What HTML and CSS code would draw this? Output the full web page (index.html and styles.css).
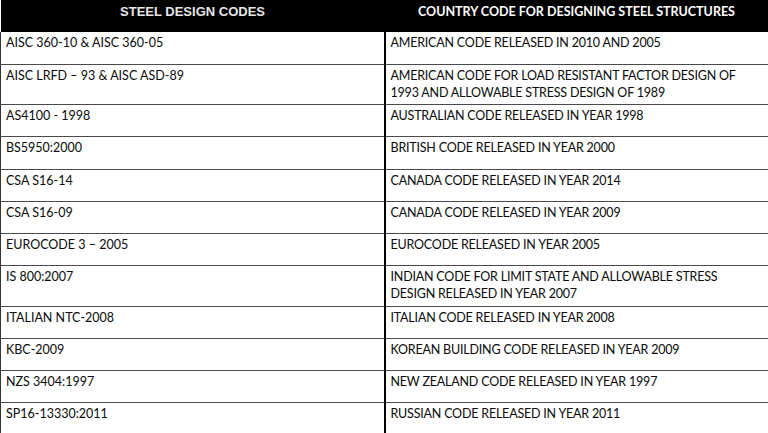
FILE: index.html
```html
<!DOCTYPE html>
<html lang="en">
<head>
<meta charset="utf-8">
<title>Steel Design Codes</title>
<link rel="stylesheet" href="styles.css">
</head>
<body>
<table class="codes">
  <colgroup>
    <col class="col-code">
    <col class="col-desc">
  </colgroup>
  <thead>
    <tr class="head-row">
      <th class="head-left">STEEL DESIGN CODES</th>
      <th class="head-right">COUNTRY CODE FOR DESIGNING STEEL STRUCTURES</th>
    </tr>
  </thead>
  <tbody>
    <tr class="row-single"><td class="code">AISC 360-10 &amp; AISC 360-05</td><td class="desc">AMERICAN CODE RELEASED IN 2010 AND 2005</td></tr>
    <tr class="row-double"><td class="code">AISC LRFD – 93 &amp; AISC ASD-89</td><td class="desc">AMERICAN CODE FOR LOAD RESISTANT FACTOR DESIGN OF 1993 AND ALLOWABLE STRESS DESIGN OF 1989</td></tr>
    <tr class="row-single"><td class="code">AS4100 - 1998</td><td class="desc">AUSTRALIAN CODE RELEASED IN YEAR 1998</td></tr>
    <tr class="row-single"><td class="code">BS5950:2000</td><td class="desc">BRITISH CODE RELEASED IN YEAR 2000</td></tr>
    <tr class="row-single"><td class="code">CSA S16-14</td><td class="desc">CANADA CODE RELEASED IN YEAR 2014</td></tr>
    <tr class="row-single"><td class="code">CSA S16-09</td><td class="desc">CANADA CODE RELEASED IN YEAR 2009</td></tr>
    <tr class="row-single"><td class="code">EUROCODE 3 – 2005</td><td class="desc">EUROCODE RELEASED IN YEAR 2005</td></tr>
    <tr class="row-double"><td class="code">IS 800:2007</td><td class="desc">INDIAN CODE FOR LIMIT STATE AND ALLOWABLE STRESS DESIGN RELEASED IN YEAR 2007</td></tr>
    <tr class="row-single"><td class="code">ITALIAN NTC-2008</td><td class="desc">ITALIAN CODE RELEASED IN YEAR 2008</td></tr>
    <tr class="row-single"><td class="code">KBC-2009</td><td class="desc">KOREAN BUILDING CODE RELEASED IN YEAR 2009</td></tr>
    <tr class="row-single"><td class="code">NZS 3404:1997</td><td class="desc">NEW ZEALAND CODE RELEASED IN YEAR 1997</td></tr>
    <tr class="row-single"><td class="code">SP16-13330:2011</td><td class="desc">RUSSIAN CODE RELEASED IN YEAR 2011</td></tr>
  </tbody>
</table>
</body>
</html>
```
FILE: styles.css
```css
html, body {
  margin: 0;
  padding: 0;
  background: #ffffff;
  overflow: hidden;
}

.codes {
  width: 768px;
  table-layout: fixed;
  border-collapse: collapse;
  border-spacing: 0;
}

.col-code { width: 384px; }
.col-desc { width: 384px; }

.head-row { height: 32px; }

.head-row th {
  background: #000000;
  vertical-align: top;
  padding: 4px 0 0;
  text-align: center;
  line-height: 15px;
}

.head-left {
  font-family: "Liberation Sans", Arial, sans-serif;
  font-size: 13px;
  font-weight: 700;
  color: #e6e6e6;
}

.head-right {
  font-family: Lato, "Open Sans", sans-serif;
  font-size: 12.5px;
  font-weight: 700;
  color: #ffffff;
}

.row-single { height: 32.2px; }
.row-double { height: 40.5px; }

.codes td {
  vertical-align: top;
  padding: 2px 6px 0 5px;
  font-family: Lato, "Open Sans", sans-serif;
  font-size: 12.5px;
  line-height: 17px;
  color: #0a0a0a;
  border-bottom: 1px solid #4a4a4a;
}

.codes td.code {
  border-left: 1px solid #333333;
  border-right: 2px solid #000000;
}

.codes td.desc {
  letter-spacing: -0.2px;
}
```
